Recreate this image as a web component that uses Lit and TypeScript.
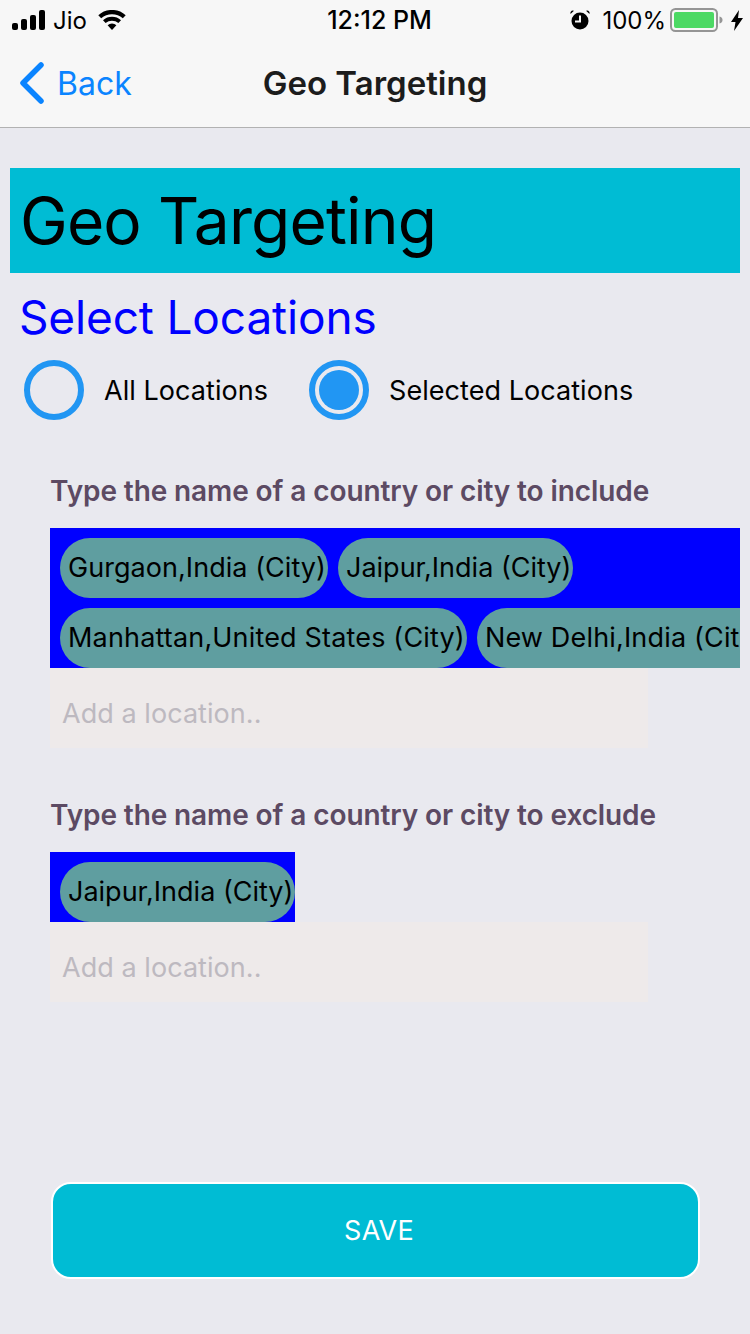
import { LitElement, html, css } from "lit";
import { customElement } from "lit/decorators.js";

@customElement("app-root")
export class AppRoot extends LitElement {
	static styles = css`
		:host {
			display: block;
			width: 750px;
			height: 1334px;
			background: #e9e9ef;
			font-family: Inter, "Liberation Sans", sans-serif;
			color: #000;
			overflow: hidden;
		}
		.top {
			background: #f7f7f7;
			border-bottom: 1px solid #b2b2b2;
			height: 127px;
		}
		.status {
			height: 40px;
			display: flex;
			align-items: center;
			justify-content: space-between;
			padding: 0 7px 0 12px;
			font-size: 24px;
		}
		.status > div {
			flex: 1;
			display: flex;
			align-items: center;
		}
		.status .right {
			justify-content: flex-end;
		}
		.carrier {
			margin: 0 11px 0 8px;
		}
		.status .time {
			margin-left: 4px;
			font-size: 25px;
			font-weight: 500;
			text-align: center;
			justify-content: center;
		}
		.pct {
			margin: 0 4px 0 12px;
		}
		.nav {
			box-sizing: border-box;
			height: 87px;
			padding-bottom: 1px;
			display: grid;
			grid-template-columns: 1fr auto 1fr;
			align-items: center;
		}
		.back {
			display: flex;
			align-items: center;
			gap: 12px;
			padding-left: 19px;
			color: #0a84ff;
			font-size: 32px;
		}
		.nav-title {
			font-size: 33px;
			font-weight: 600;
			color: #1c1c1c;
		}
		.banner {
			margin: 40px 10px 0;
			height: 105px;
			padding-left: 10px;
			background: #00bcd4;
			font-size: 64px;
			line-height: 105px;
			letter-spacing: -0.85px;
		}
		.subtitle {
			margin: 14px 0 0 19px;
			font-size: 46px;
			line-height: 60px;
			letter-spacing: -0.15px;
			color: #0000ff;
		}
		.radios {
			display: flex;
			align-items: center;
			margin: 13px 0 0 24px;
			height: 60px;
			font-size: 27px;
			letter-spacing: 0.05px;
		}
		.radio {
			box-sizing: border-box;
			width: 60px;
			height: 60px;
			border: 6px solid #2196f3;
			border-radius: 50%;
			padding: 4px;
			margin-right: 20px;
		}
		.radio.on::after {
			content: "";
			display: block;
			width: 40px;
			height: 40px;
			border-radius: 50%;
			background: #2196f3;
		}
		.radios span {
			margin-right: 41px;
		}
		.section {
			margin-left: 50px;
			width: 690px;
		}
		.label {
			margin-top: 51px;
			font-size: 28px;
			font-weight: 600;
			line-height: 40px;
			letter-spacing: -0.1px;
			color: #5c4a63;
			white-space: nowrap;
		}
		.label.second {
			margin-top: 47px;
		}
		.chips {
			margin-top: 17px;
			background: #0000ff;
			padding: 10px 0 0 10px;
			overflow: hidden;
			display: flex;
			flex-direction: column;
			gap: 10px;
		}
		.chips.fit {
			width: fit-content;
		}
		.row {
			display: flex;
			gap: 10px;
		}
		.chip {
			flex: none;
			height: 60px;
			line-height: 60px;
			padding: 0 2px 0 8px;
			border-radius: 30px;
			background: #5f9ea0;
			font-size: 27px;
			white-space: nowrap;
		}
		.chip.first {
			letter-spacing: 0.05px;
		}
		.chip.wide {
			letter-spacing: 0.17px;
		}
		.input {
			width: 598px;
			height: 80px;
			box-sizing: border-box;
			padding-left: 12px;
			background: #eeeaea;
			color: #bdb9c0;
			font-size: 27px;
			letter-spacing: 0.05px;
			line-height: 92px;
		}
		.save {
			box-sizing: border-box;
			margin: 180px 0 0 51px;
			width: 649px;
			height: 97px;
			padding-left: 7px;
			border: 2px solid #fff;
			border-radius: 20px;
			background: #00bcd4;
			color: #fff;
			font-size: 27px;
			letter-spacing: 0.2px;
			display: flex;
			align-items: center;
			justify-content: center;
		}
	`;

	private chip(text: string, cls = "") {
		return html`<div class="chip ${cls}">${text}</div>`;
	}

	render() {
		return html`
			<div class="top">
				<div class="status">
					<div>
						<svg width="33" height="20" viewBox="0 0 33 20">
							<rect x="0" y="13" width="6" height="7" rx="2" />
							<rect x="9" y="9" width="6" height="11" rx="2" />
							<rect x="18" y="5" width="6" height="15" rx="2" />
							<rect x="27" y="0" width="6" height="20" rx="2" />
						</svg>
						<span class="carrier">Jio</span>
						<svg width="28" height="20" viewBox="0 0 28 20">
							<path d="M14 20 9.6 15.2a6.6 6.6 0 0 1 8.8 0Z" />
							<path
								d="M7.6 13.1 5 10.2a13.6 13.6 0 0 1 18 0l-2.6 2.9a9.8 9.8 0 0 0-12.8 0Z"
							/>
							<path
								d="M3.2 8.3.3 5.2a20.4 20.4 0 0 1 27.4 0l-2.9 3.1a16.4 16.4 0 0 0-21.6 0Z"
							/>
						</svg>
					</div>
					<div class="time">12:12 PM</div>
					<div class="right">
						<svg width="20" height="20" viewBox="0 0 20 20">
							<circle cx="10" cy="11" r="8.5" />
							<path d="M10 5.5V11.5H5" fill="none" stroke="#f7f7f7" stroke-width="2" />
							<path d="M.5 4 4 .8 2 .6.5 2ZM19.5 4 16 .8 18 .6 19.500 2Z" />
						</svg>
						<span class="pct">100%</span>
						<svg width="54" height="24" viewBox="0 0 54 24">
							<rect x="1" y="1" width="46" height="22" rx="4.500" fill="none" stroke="#959595" stroke-width="2" />
							<rect x="4" y="4" width="40" height="16" rx="2" fill="#4cd964" />
							<path d="M49.500 8.500c2 .5 3 1.700 3 3.500s-1 3-3 3.500Z" fill="#959595" />
						</svg>
						<svg width="12" height="21" viewBox="0 0 12 21" style="margin-left:7px">
							<path d="M8 0 0 12h4.500L3 21l9-13H7Z" />
						</svg>
					</div>
				</div>
				<div class="nav">
					<div class="back">
						<svg width="26" height="42" viewBox="0 0 26 42">
							<path
								d="M22 3 4 21l18 18"
								fill="none"
								stroke="#0a84ff"
								stroke-width="5.500"
								stroke-linecap="round"
								stroke-linejoin="round"
							/>
						</svg>
						<span>Back</span>
					</div>
					<div class="nav-title">Geo Targeting</div>
					<div></div>
				</div>
			</div>

			<div class="banner">Geo Targeting</div>
			<div class="subtitle">Select Locations</div>
			<div class="radios">
				<div class="radio"></div>
				<span>All Locations</span>
				<div class="radio on"></div>
				<span>Selected Locations</span>
			</div>

			<div class="section">
				<div class="label">Type the name of a country or city to include</div>
				<div class="chips">
					<div class="row">
						${this.chip("Gurgaon,India (City)", "first")} ${this.chip("Jaipur,India (City)")}
					</div>
					<div class="row">
						${this.chip("Manhattan,United States (City)", "wide")}
						${this.chip("New Delhi,India (City)", "wide")}
					</div>
				</div>
				<div class="input">Add a location..</div>

				<div class="label second">Type the name of a country or city to exclude</div>
				<div class="chips fit">
					<div class="row">${this.chip("Jaipur,India (City)")}</div>
				</div>
				<div class="input">Add a location..</div>
			</div>

			<div class="save">SAVE</div>
		`;
	}
}
